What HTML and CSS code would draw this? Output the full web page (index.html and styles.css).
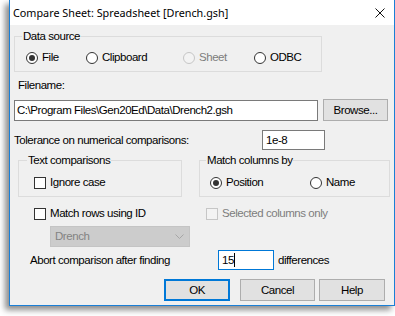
FILE: index.html
```html
<!DOCTYPE html>
<html>
<head>
<meta charset="utf-8">
<link rel="stylesheet" href="styles.css">
</head>
<body>
<div class="dialog">
  <div class="titlebar">
    <span class="title">Compare Sheet: Spreadsheet [Drench.gsh]</span>
    <svg class="close" width="10" height="10" viewBox="0 0 10 10"><path d="M0.5 0.5 L9.5 9.5 M9.5 0.5 L0.5 9.5" stroke="#111" stroke-width="1" fill="none"/></svg>
  </div>
  <div class="body">
    <fieldset class="group ds">
      <legend>Data source</legend>
      <div class="radios">
        <label class="opt w-file"><span class="radio on"></span>File</label>
        <label class="opt w-clip"><span class="radio"></span>Clipboard</label>
        <label class="opt w-sheet disabled"><span class="radio"></span>Sheet</label>
        <label class="opt"><span class="radio"></span>ODBC</label>
      </div>
    </fieldset>

    <div class="lbl filename">Filename:</div>

    <div class="row file-row">
      <div class="input path">C:\Program Files\Gen20Ed\Data\Drench2.gsh</div>
      <div class="btn browse">Browse...</div>
    </div>

    <div class="row tol-row">
      <span class="tol-label">Tolerance on numerical comparisons:</span>
      <div class="input tol">1e-8</div>
    </div>

    <div class="row groups">
      <fieldset class="group tc">
        <legend>Text comparisons</legend>
        <div class="inner tc-inner">
          <label class="opt"><span class="check"></span>Ignore case</label>
        </div>
      </fieldset>
      <fieldset class="group mc">
        <legend>Match columns by</legend>
        <div class="inner mc-inner">
          <label class="opt w-pos"><span class="radio on"></span>Position</label>
          <label class="opt"><span class="radio"></span>Name</label>
        </div>
      </fieldset>
    </div>

    <div class="row id-row">
      <label class="opt w-id"><span class="check"></span>Match rows using ID</label>
      <label class="opt disabled"><span class="check"></span>Selected columns only</label>
    </div>

    <div class="combo">
      <span>Drench</span>
      <svg class="chev" width="9" height="5" viewBox="0 0 9 5"><path d="M0.5 0.5 L4.5 4.5 L8.5 0.5" stroke="#a6a6a6" stroke-width="1" fill="none"/></svg>
    </div>

    <div class="row abort-row">
      <span class="abort-label">Abort comparison after finding</span>
      <div class="input focus">15<span class="caret"></span></div>
      <span class="diff">differences</span>
    </div>

    <div class="row buttons">
      <div class="btn ok">OK</div>
      <div class="btn cancel">Cancel</div>
      <div class="btn help">Help</div>
    </div>
  </div>
</div>
</body>
</html>
```
FILE: styles.css
```css
html, body {
  margin: 0;
  padding: 0;
  background: #ffffff;
}
body {
  width: 395px;
  height: 316px;
  overflow: hidden;
  font-family: "Liberation Sans", Arial, sans-serif;
  font-size: 11.5px;
  line-height: 13px;
  letter-spacing: -0.45px;
  color: #000;
}
.dialog {
  box-sizing: border-box;
  margin-left: 9px;
  width: 386px;
  height: 306px;
  border: 1px solid #1a7fd6;
  border-top: 0;
  background: #f0f0f0;
  box-shadow: -4px 4px 6px rgba(0,0,0,0.45);
  display: flex;
  flex-direction: column;
}
.titlebar {
  height: 25px;
  background: #ffffff;
  display: flex;
  align-items: center;
  padding-left: 3px;
  padding-right: 9px;
}
.title {
  font-family: "Noto Sans", "Open Sans", sans-serif;
  font-size: 10.8px;
  letter-spacing: 0;
  flex: 1;
  white-space: nowrap;
}
.close { display: block; margin-top: 1px; }

.body {
  display: flex;
  flex-direction: column;
  flex: 1;
}
.row { display: flex; }

fieldset.group {
  margin: 0;
  border: 1px solid #dcdcdc;
  min-width: 0;
  box-sizing: border-box;
}
fieldset.group legend {
  padding: 0 1px;
  line-height: 13px;
  height: 13px;
}
.ds {
  margin: 5px 0 0 4px !important;
  width: 308px;
  height: 42px;
  padding: 0 0 0 7px;
}
.radios {
  display: grid;
  grid-template-columns: 60px 97px 71px auto;
  margin: 8px 0 0 4px;
}
.opt {
  display: flex;
  align-items: center;
  height: 13px;
  white-space: nowrap;
}
.w-pos { width: 100px; }
.radio {
  box-sizing: border-box;
  width: 12px;
  height: 12px;
  border: 1px solid #333;
  border-radius: 50%;
  background: #fff;
  margin-right: 4px;
  display: flex;
  align-items: center;
  justify-content: center;
  flex: none;
}
.radio.on::after {
  content: "";
  width: 6px;
  height: 6px;
  border-radius: 50%;
  background: #333;
}
.check {
  box-sizing: border-box;
  width: 12px;
  height: 12px;
  border: 1px solid #333;
  background: #fff;
  margin-right: 4px;
  flex: none;
}
.disabled { color: #7d7d7d; }
.disabled .radio, .disabled .check {
  border-color: #c6c6c6;
  background: #f3f3f3;
}

.filename {
  margin: 7px 0 0 8px;
  height: 13px;
}
.file-row {
  margin: 7px 0 0 4px;
  align-items: flex-start;
}
.input {
  box-sizing: border-box;
  border: 1px solid #7a7a7a;
  background: #fff;
  height: 21px;
  padding: 3px 0 0 2px;
  white-space: nowrap;
  overflow: hidden;
}
.path {
  width: 304px;
  margin-top: 1px;
}
.btn {
  box-sizing: border-box;
  height: 22px;
  border: 1px solid #adadad;
  background: #e1e1e1;
  display: flex;
  align-items: center;
  justify-content: center;
}
.browse {
  width: 65px;
  margin-left: 5px;
}

.tol-row {
  margin: 9px 0 0 4px;
  align-items: center;
}
.tol-label { width: 248px; }
.tol {
  width: 63px;
  height: 20px;
  padding-left: 3px;
}

.groups {
  margin: 4px 0 0 8px;
  gap: 17px;
}
.tc {
  width: 164px;
  height: 43px;
  padding: 0 0 0 8px;
}
.mc {
  width: 191px;
  height: 43px;
  padding: 0 0 0 6px;
}
.inner {
  display: flex;
  margin-top: 9px;
}
.tc-inner { margin-left: 7px; }
.mc-inner { margin-left: 4px; }

.id-row {
  margin: 10px 0 0 24px;
}
.w-id { width: 172px; }

.combo {
  box-sizing: border-box;
  margin: 6px 0 0 40px;
  width: 140px;
  height: 21px;
  background: #cccccc;
  border: 1px solid #c4c4c4;
  color: #838383;
  display: flex;
  align-items: center;
  justify-content: space-between;
  padding: 0 5px 0 4px;
}
.chev { display: block; }

.abort-row {
  margin: 3px 0 0 20px;
  align-items: center;
}
.abort-label { width: 188px; }
.focus {
  width: 56px;
  height: 20px;
  border-color: #0078d7;
  padding-left: 3px;
  display: flex;
  align-items: flex-start;
}
.caret {
  display: inline-block;
  width: 1px;
  height: 14px;
  background: #000;
  margin-left: 0px;
  margin-top: -1px;
}
.diff { margin-left: 4px; }

.buttons {
  margin: 9px 9px 0 0;
  justify-content: flex-end;
}
.ok {
  width: 66px;
  border: 2px solid #0078d7;
}
.cancel {
  width: 75px;
  margin-left: 10px;
}
.help {
  width: 66px;
  margin-left: 4px;
}
```
